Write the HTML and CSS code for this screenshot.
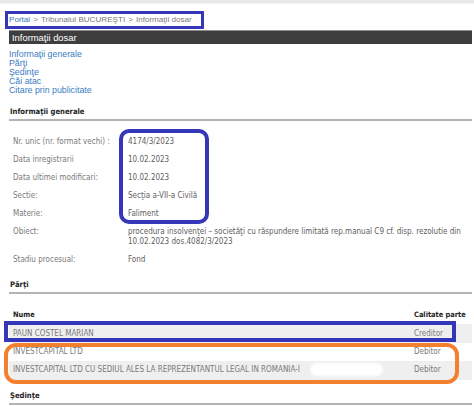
FILE: index.html
```html
<!DOCTYPE html>
<html lang="ro">
<head>
<meta charset="utf-8">
<title>Informaţii dosar</title>
<link rel="stylesheet" href="styles.css">
</head>
<body>
<div class="page">
  <div class="topstrip"></div>
  <div class="crumbs"><a class="crumb-link" href="#">Portal</a><span class="sep">&gt;</span>Tribunalul BUCUREŞTI<span class="sep">&gt;</span>Informaţii dosar</div>
  <div class="content">
    <div class="titlebar">Informaţii dosar</div>
    <ul class="links">
      <li><a href="#">Informaţii generale</a></li>
      <li><a href="#">Părţi</a></li>
      <li><a href="#">Şedinţe</a></li>
      <li><a href="#">Căi atac</a></li>
      <li><a href="#">Citare prin publicitate</a></li>
    </ul>

    <h2 class="section">Informaţii generale</h2>
    <div class="info">
      <div class="label">Nr. unic (nr. format vechi) :</div><div class="value">4174/3/2023</div>
      <div class="label">Data inregistrarii</div><div class="value">10.02.2023</div>
      <div class="label">Data ultimei modificari:</div><div class="value">10.02.2023</div>
      <div class="label">Sectie:</div><div class="value">Secţia a-VII-a Civilă</div>
      <div class="label">Materie:</div><div class="value">Faliment</div>
      <div class="label">Obiect:</div><div class="value">procedura insolvenţei – societăţi cu răspundere limitată rep.manual C9 cf. disp. rezolutie din 10.02.2023 dos.4082/3/2023</div>
      <div class="label">Stadiu procesual:</div><div class="value">Fond</div>
    </div>

    <h2 class="section section-parti">Părţi</h2>
    <div class="parties">
      <div class="prow phead"><div class="pname">Nume</div><div class="prole">Calitate parte</div></div>
      <div class="prow shaded"><div class="pname">PAUN COSTEL MARIAN</div><div class="prole">Creditor</div></div>
      <div class="prow"><div class="pname">INVESTCAPITAL LTD</div><div class="prole">Debitor</div></div>
      <div class="prow shaded"><div class="pname">INVESTCAPITAL LTD CU SEDIUL ALES LA REPREZENTANTUL LEGAL IN ROMANIA-I</div><div class="prole">Debitor</div></div>
    </div>

    <h2 class="section section-sedinte">Şedinţe</h2>
  </div>

  <div class="mark mark-values"></div>
  <div class="mark mark-creditor"></div>
  <div class="mark mark-debitor"></div>
  <div class="redact"></div>
</div>
</body>
</html>
```

FILE: styles.css
```css
html, body {
  margin: 0;
  padding: 0;
  background: #ffffff;
}

.page {
  position: relative;
  width: 474px;
  height: 406px;
  overflow: hidden;
  font-family: "DejaVu Sans Condensed", "DejaVu Sans", sans-serif;
  font-stretch: condensed;
  font-size: 8px;
  color: #666;
}

.topstrip {
  height: 3px;
  background: #e8e8e8;
  border-bottom: 1px solid #f2f2f2;
}

.crumbs {
  margin: 7px 0 0 5px;
  width: 192px;
  height: 12px;
  line-height: 12px;
  padding-left: 1px;
  border: 3px solid #3636b8;
  font-family: "Liberation Sans", Arial, sans-serif;
  font-stretch: normal;
  font-size: 8.1px;
  color: #7a7a7a;
  white-space: nowrap;
  overflow: hidden;
}

.crumb-link {
  color: #2f74bd;
  text-decoration: none;
}

.sep {
  margin: 0 3px 0 3px;
}

.content {
  margin: 1px 2px 0 9px;
}

.titlebar {
  height: 14px;
  line-height: 14px;
  box-sizing: border-box;
  border-top: 1px solid #8c8c8c;
  background: #3e3e3e;
  color: #ffffff;
  padding-left: 3px;
  font-family: "Liberation Sans", Arial, sans-serif;
  font-stretch: normal;
  font-size: 9.4px;
}

.links {
  list-style: none;
  margin: 6px 0 0 0;
  padding: 0;
  font-family: "Liberation Sans", Arial, sans-serif;
  font-stretch: normal;
  font-size: 8.8px;
  line-height: 9px;
}

.links a {
  color: #3a7cc2;
  text-decoration: none;
}

.section {
  margin: 11px 0 0 0;
  padding: 0 0 1px 1px;
  height: 12px;
  line-height: 12px;
  border-bottom: 2px solid #b4b4b4;
  font-size: 7.6px;
  font-weight: bold;
  color: #222;
}

.section-parti {
  margin-top: 10px;
}

.section-sedinte {
  margin-top: 10px;
}

.info {
  display: grid;
  grid-template-columns: 119px 1fr;
  margin-top: 12px;
  line-height: 10px;
}

.label,
.value {
  padding: 4px 0;
}

.label {
  padding-left: 4px;
  color: #7a7a7a;
}

.value {
  color: #606060;
  padding-right: 2px;
}

.parties {
  margin-top: 12px;
  line-height: 10px;
}

.prow {
  display: grid;
  grid-template-columns: 1fr 58px;
  padding: 4.2px 0;
  color: #7a7a7a;
}

.prow.shaded {
  background: #efefef;
}

.phead {
  color: #222;
  font-weight: bold;
  font-size: 7.4px;
}

.pname {
  padding-left: 4px;
  white-space: nowrap;
}

.prole {
  white-space: nowrap;
}

.mark {
  position: absolute;
  box-sizing: border-box;
  border-width: 4px;
  border-style: solid;
}

.mark-values {
  left: 119px;
  top: 129px;
  width: 90px;
  height: 95px;
  border-color: #3636b8;
  border-radius: 10px;
}

.mark-creditor {
  left: 4px;
  top: 321px;
  width: 452px;
  height: 21px;
  border-color: #3636b8;
}

.mark-debitor {
  left: 4px;
  top: 343px;
  width: 455px;
  height: 41px;
  border-color: #f2802e;
  border-radius: 12px;
}

.redact {
  position: absolute;
  left: 310px;
  top: 363px;
  width: 73px;
  height: 13px;
  border-radius: 7px;
  background: #ffffff;
  filter: blur(1px);
}
```
